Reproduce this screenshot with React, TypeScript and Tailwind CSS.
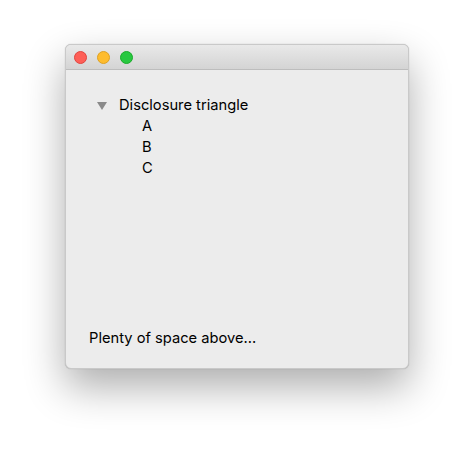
import React from 'react'

export default function App() {
  const items = ['A', 'B', 'C']
  return (
    <div
      className="w-[474px] h-[455px] bg-white pt-[44px] pl-[65px]"
      style={{ fontFamily: 'Inter, "Noto Sans", sans-serif' }}
    >
      <div className="w-[344px] h-[325px] flex flex-col rounded-[6px] overflow-hidden bg-[#ececec] border border-[#c9c9c9] shadow-[0_18px_40px_rgba(0,0,0,0.32),0_0_1px_rgba(0,0,0,0.3)]">
        {/* Title bar */}
        <div className="h-[25px] shrink-0 flex items-center gap-[10px] pl-[8px] bg-gradient-to-b from-[#e9e9e9] to-[#d4d4d4] border-b border-[#bdbdbd]">
          <span className="w-[13px] h-[13px] rounded-full bg-[#fe5f57] border border-[#e0443e]" />
          <span className="w-[13px] h-[13px] rounded-full bg-[#febc2e] border border-[#dea123]" />
          <span className="w-[13px] h-[13px] rounded-full bg-[#28c840] border border-[#1aab29]" />
        </div>

        {/* Body */}
        <div className="flex-1 flex flex-col justify-between pt-[25px] pb-[19px] text-[14.7px] text-black">
          <div className="flex flex-col">
            <div className="h-[21px] flex items-center pl-[31px] gap-[12px]">
              <svg width="10" height="8" viewBox="0 0 10 8">
                <path d="M0 0 L10 0 L5 8 Z" fill="#8a8a8a" />
              </svg>
              <span>Disclosure triangle</span>
            </div>
            {items.map(t => (
              <div key={t} className="h-[21px] flex items-center pl-[76px]">
                {t}
              </div>
            ))}
          </div>
          <div className="pl-[23px]">Plenty of space above...</div>
        </div>
      </div>
    </div>
  )
}
